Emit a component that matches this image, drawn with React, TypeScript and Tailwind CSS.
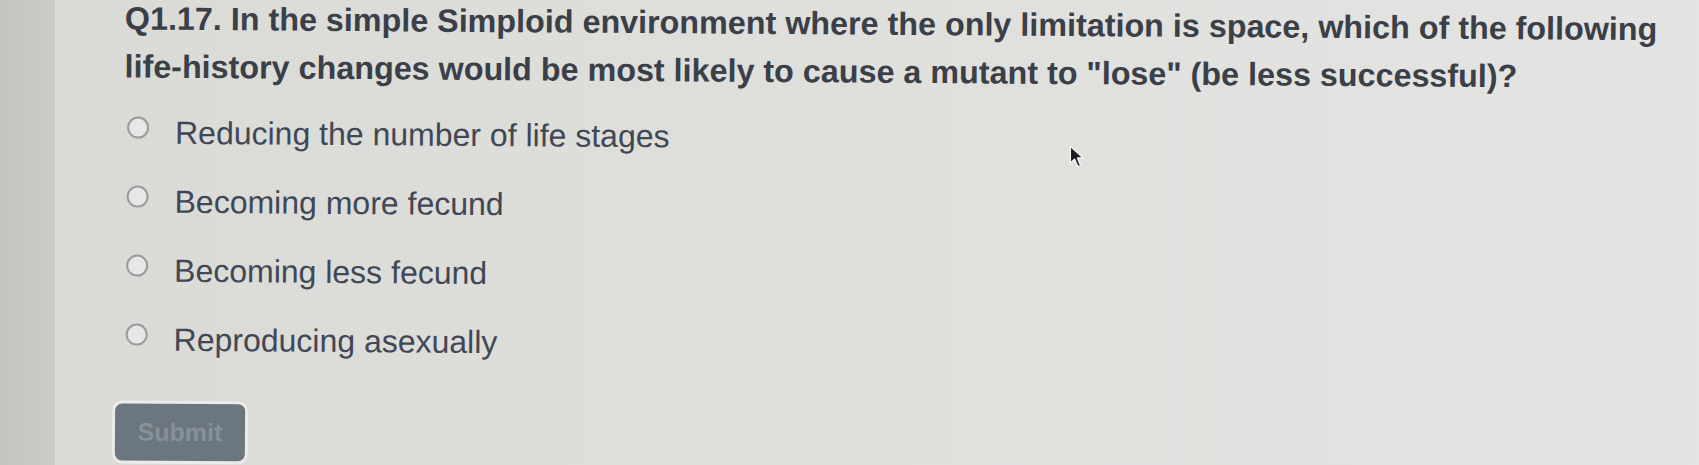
const options = [
  'Reducing the number of life stages',
  'Becoming more fecund',
  'Becoming less fecund',
  'Reproducing asexually',
];

function Radio() {
  return (
    <span className="mt-[4px] ml-[3px] h-[22px] w-[22px] shrink-0 rounded-full border-2 border-[#9a9c9e] bg-[#e7e7e5]" />
  );
}

function Cursor() {
  return (
    <svg
      className="absolute left-[1069px] top-[145px] h-[24px] w-[17px]"
      viewBox="0 0 14 20"
    >
      <path
        d="M1 1 L1 15 L4.5 11.8 L7.2 18 L9.6 17 L7 10.9 L11.8 10.9 Z"
        fill="#1b1d22"
        stroke="#f4f4f2"
        strokeWidth="1.2"
        strokeLinejoin="round"
      />
    </svg>
  );
}

export default function App() {
  return (
    <div className="relative flex h-[465px] w-full overflow-hidden font-['Liberation_Sans',Arial,sans-serif]">
      <div className="w-[55px] shrink-0 bg-gradient-to-r from-[#c3c3c0] to-[#cbcbc8]" />
      <div className="flex-1 bg-gradient-to-r from-[#dadad7] via-[#dfdfdc] to-[#e4e5e3]">
        <div className="origin-top-left rotate-[0.4deg] pl-[70px]">
          <h1 className="text-[32.3px] font-bold leading-[36px] text-[#3a3f48]">
            <span className="block whitespace-nowrap">
              Q1.17. In the simple Simploid environment where the only limitation is space, which of the following
            </span>
            <span className="mt-[12px] block whitespace-nowrap">
              life-history changes would be most likely to cause a mutant to "lose" (be less successful)?
            </span>
          </h1>

          <div className="mt-[28px] flex flex-col gap-[29px]">
            {options.map((label) => (
              <label key={label} className="flex h-[40px] items-start gap-[26px]">
                <Radio />
                <span className="text-[32px] leading-[40px] text-[#414855]">{label}</span>
              </label>
            ))}
          </div>

          <button className="-ml-[7px] mt-[44px] flex h-[57px] w-[130px] items-center justify-center rounded-[7px] bg-[#6b767f] text-[25px] font-bold text-[#87919a] ring-[3px] ring-[#ebebe8]">
            Submit
          </button>
        </div>
      </div>
      <Cursor />
    </div>
  );
}
